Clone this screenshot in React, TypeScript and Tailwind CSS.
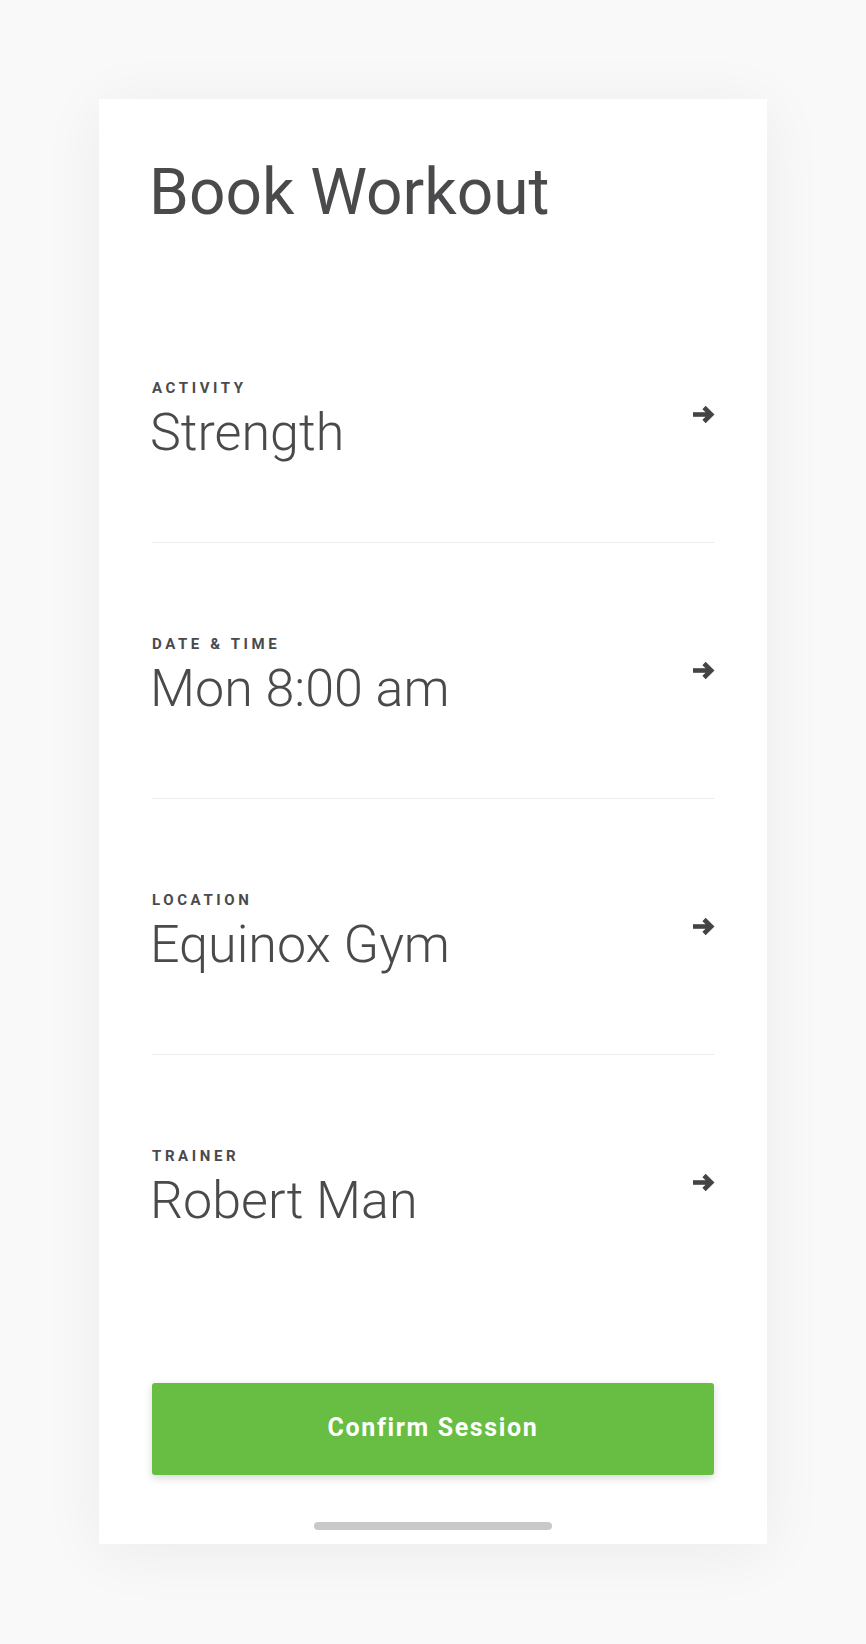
import React from "react";

type Row = {
  label: string;
  value: string;
};

const rows: Row[] = [
  { label: "Activity", value: "Strength" },
  { label: "Date & Time", value: "Mon 8:00 am" },
  { label: "Location", value: "Equinox Gym" },
  { label: "Trainer", value: "Robert Man" },
];

const Arrow = () => (
  <svg width="24" height="19" viewBox="0 0 24 19" fill="none" className="mt-[24px] mr-[-2px] shrink-0">
    <path d="M1 9.5H19" stroke="#444446" strokeWidth="4.6" />
    <path d="M12 2.5L19.2 9.5L12 16.5" stroke="#444446" strokeWidth="4.6" strokeLinejoin="miter" />
  </svg>
);

const App = () => {
  return (
    <div
      className="min-h-screen bg-[#f9f9fa] pt-[99px] pb-[100px]"
      style={{ fontFamily: "Roboto, 'Liberation Sans', sans-serif" }}
    >
      <div className="mx-auto flex h-[1445px] w-[668px] flex-col bg-white px-[53px] pt-[62px] shadow-[0_8px_60px_rgba(0,0,0,0.06)]">
        <h1 className="ml-[-3px] text-[64px] leading-[64px] font-normal text-[#4a4a4c]">Book Workout</h1>

        <div className="mt-[62px]">
          {rows.map((row, i) => (
            <div
              key={row.label}
              className={`flex items-start justify-between pt-[94px] pb-[83px] ${
                i < rows.length - 1 ? "border-b border-[#ededee]" : ""
              }`}
            >
              <div className="flex flex-col">
                <div className="text-[15px] leading-[15px] font-bold uppercase tracking-[0.24em] text-[#4a4a4c]">
                  {row.label}
                </div>
                <div className="ml-[-2px] mt-[11px] text-[52px] leading-[52px] font-light text-[#4a4a4c]">
                  {row.value}
                </div>
              </div>
              <Arrow />
            </div>
          ))}
        </div>

        <button className="mt-[73px] h-[92px] w-full rounded-[3px] bg-[#67be42] pb-[2px] text-[25px] font-bold tracking-[0.065em] text-white shadow-[0_3px_8px_rgba(0,0,0,0.16)]">
          Confirm Session
        </button>

        <div className="mx-auto mt-[47px] h-[8px] w-[238px] rounded-full bg-[#c9c9c9]" />
      </div>
    </div>
  );
};

export default App;
